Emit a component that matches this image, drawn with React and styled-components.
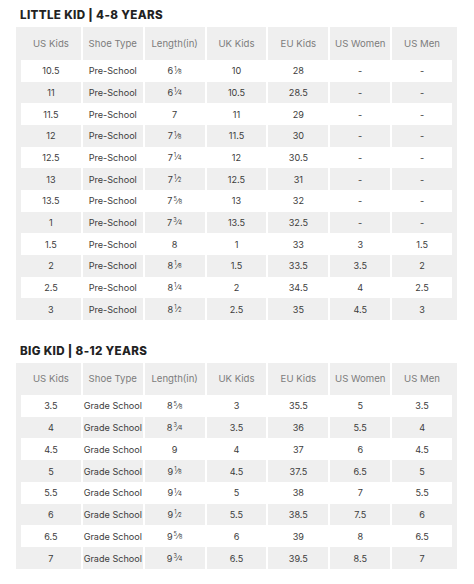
import React from "react";
import styled, { createGlobalStyle } from "styled-components";

const Global = createGlobalStyle`
  html, body { margin: 0; padding: 0; background: #fff; }
  body { font-family: Inter, "Open Sans", Arial, sans-serif; }
`;

const Page = styled.div`
  width: 474px;
  padding: 5px 17px 0 16px;
  box-sizing: border-box;
`;

const Section = styled.section`
  margin-bottom: ${(p) => p.$gap || 0}px;
`;

const Title = styled.h2`
  margin: 0 0 0 4px;
  height: 22px;
  line-height: 20px;
  font-size: 11.6px;
  font-weight: 800;
  color: #222;
  letter-spacing: 0.35px;
`;

const Table = styled.div`
  background: #efefef;
  padding: 0 5px;
`;

const Row = styled.div`
  display: grid;
  grid-template-columns: repeat(7, 1fr);
  column-gap: 2px;
  background: #fff;
  height: ${(p) => p.$h}px;
`;

const Cell = styled.div`
  display: flex;
  align-items: center;
  justify-content: center;
  background: ${(p) => (p.$gray ? "#efefef" : "#fff")};
  font-size: ${(p) => (p.$head ? 9.6 : 9.1)}px;
  font-weight: 400;
  color: ${(p) => (p.$head ? "#7c7c7c" : "#3c3c3c")};
  white-space: nowrap;
`;

const FracWrap = styled.span`
  display: inline-flex;
  align-items: center;
  margin-left: 1px;
  font-size: 5.5px;
  line-height: 1;
`;

const Num = styled.span`
  position: relative;
  top: -1.5px;
`;

const Den = styled.span`
  position: relative;
  top: 1.5px;
`;

const Slash = styled.span`
  font-size: 8px;
  margin: 0 0.2px;
`;

function Len({ v }) {
  const m = v.match(/^(\d+)(?: (\d)\/(\d))?$/);
  if (!m || !m[2]) return <>{v}</>;
  return (
    <>
      {m[1]}
      <FracWrap>
        <Num>{m[2]}</Num>
        <Slash>⁄</Slash>
        <Den>{m[3]}</Den>
      </FracWrap>
    </>
  );
}

const headers = ["US Kids", "Shoe Type", "Length(in)", "UK Kids", "EU Kids", "US Women", "US Men"];

const little = [
  ["10.5", "Pre-School", "6 1/8", "10", "28", "-", "-"],
  ["11", "Pre-School", "6 1/4", "10.5", "28.5", "-", "-"],
  ["11.5", "Pre-School", "7", "11", "29", "-", "-"],
  ["12", "Pre-School", "7 1/8", "11.5", "30", "-", "-"],
  ["12.5", "Pre-School", "7 1/4", "12", "30.5", "-", "-"],
  ["13", "Pre-School", "7 1/2", "12.5", "31", "-", "-"],
  ["13.5", "Pre-School", "7 5/8", "13", "32", "-", "-"],
  ["1", "Pre-School", "7 3/4", "13.5", "32.5", "-", "-"],
  ["1.5", "Pre-School", "8", "1", "33", "3", "1.5"],
  ["2", "Pre-School", "8 1/8", "1.5", "33.5", "3.5", "2"],
  ["2.5", "Pre-School", "8 1/4", "2", "34.5", "4", "2.5"],
  ["3", "Pre-School", "8 1/2", "2.5", "35", "4.5", "3"],
];

const big = [
  ["3.5", "Grade School", "8 5/8", "3", "35.5", "5", "3.5"],
  ["4", "Grade School", "8 3/4", "3.5", "36", "5.5", "4"],
  ["4.5", "Grade School", "9", "4", "37", "6", "4.5"],
  ["5", "Grade School", "9 1/8", "4.5", "37.5", "6.5", "5"],
  ["5.5", "Grade School", "9 1/4", "5", "38", "7", "5.5"],
  ["6", "Grade School", "9 1/2", "5.5", "38.5", "7.5", "6"],
  ["6.5", "Grade School", "9 5/8", "6", "39", "8", "6.5"],
  ["7", "Grade School", "9 3/4", "6.5", "39.5", "8.5", "7"],
];

function SizeTable({ rows, rowH, headH }) {
  return (
    <Table>
      <Row $h={headH}>
        {headers.map((h) => (
          <Cell key={h} $gray $head>
            {h}
          </Cell>
        ))}
      </Row>
      {rows.map((r, i) => {
        const gray = i % 2 === 1;
        return (
          <Row key={i} $h={rowH}>
            {r.map((c, j) => (
              <Cell key={j} $gray={gray}>
                {j === 2 ? <Len v={c} /> : c}
              </Cell>
            ))}
          </Row>
        );
      })}
    </Table>
  );
}

export default function App() {
  return (
    <Page>
      <Global />
      <Section $gap={21}>
        <Title>LITTLE KID | 4-8 YEARS</Title>
        <SizeTable rows={little} rowH={21.67} headH={33} />
      </Section>
      <Section>
        <Title>BIG KID | 8-12 YEARS</Title>
        <SizeTable rows={big} rowH={21.75} headH={32} />
      </Section>
    </Page>
  );
}
